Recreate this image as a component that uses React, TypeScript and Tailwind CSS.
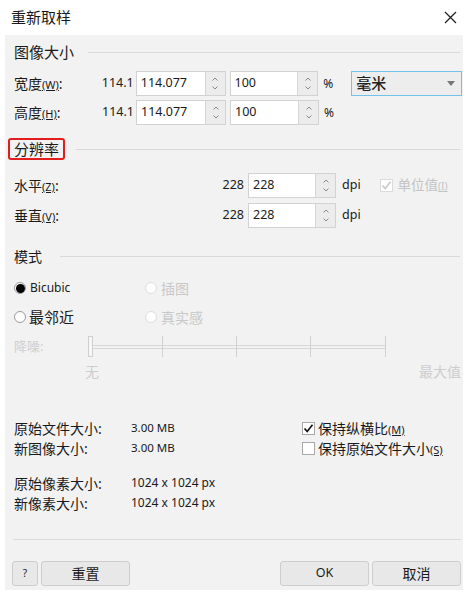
import React from "react"

const font = { fontFamily: '"Noto Sans", "Noto Sans CJK SC", sans-serif' }

function Spin() {
    return (
        <div className="flex flex-col items-center justify-center gap-[5px] bg-[#ececec] border-l border-[#d6d6d6] h-full w-[20px]">
            <svg width="6" height="4" viewBox="0 0 6 4"><path d="M0.5 3.5 L3 1 L5.5 3.5" fill="none" stroke="#8a8a8a" strokeWidth="1" /></svg>
            <svg width="6" height="4" viewBox="0 0 6 4"><path d="M0.5 0.5 L3 3 L5.5 0.5" fill="none" stroke="#8a8a8a" strokeWidth="1" /></svg>
        </div>
    )
}

function NumInput({ value, w }: { value: string; w: string }) {
    return (
        <div className={`flex h-[25px] border border-[#d2d2d2] bg-white ${w}`}>
            <div className="flex-1 flex items-center pl-[4px] text-[12.5px] text-[#1a1a1a]">{value}</div>
            <Spin />
        </div>
    )
}

function SectionHead({ children, lineFrom }: { children: React.ReactNode; lineFrom: string }) {
    return (
        <div className="flex items-center h-[20px]">
            <div className={`shrink-0 ${lineFrom}`}>{children}</div>
            <div className="flex-1 h-px bg-[#d9d9d9] mr-[2px]" />
        </div>
    )
}

function Radio({ checked, disabled }: { checked?: boolean; disabled?: boolean }) {
    return (
        <div className={`w-[12px] h-[12px] rounded-full border flex items-center justify-center bg-white ${disabled ? "border-[#dcdcdc]" : "border-[#9a9a9a]"}`}>
            {checked && <div className="w-[9px] h-[9px] rounded-full bg-black" />}
        </div>
    )
}

function Check({ checked, disabled }: { checked?: boolean; disabled?: boolean }) {
    return (
        <div className={`w-[13px] h-[13px] border bg-white flex items-center justify-center ${disabled ? "border-[#dadada]" : "border-[#a8a8a8]"}`}>
            {checked && (
                <svg width="11" height="11" viewBox="0 0 11 11">
                    <path d="M1.5 5.5 L4.2 8.5 L9.5 1.8" fill="none" stroke={disabled ? "#c9c9c9" : "#111"} strokeWidth="1.7" />
                </svg>
            )}
        </div>
    )
}

function Btn({ children, w }: { children: React.ReactNode; w: string }) {
    return (
        <div className={`h-[25px] ${w} flex items-center justify-center bg-[#e8e8e8] border border-[#cdcdcd] rounded-[3px] text-[#1a1a1a]`}>
            {children}
        </div>
    )
}

export default function App() {
    return (
        <div className="w-[474px] h-[597px] bg-white overflow-hidden text-[#1a1a1a]" style={font}>
            {/* Title bar */}
            <div className="h-[35px] flex items-center justify-between pl-[11px] pr-[17px]">
                <span className="text-[15px]">重新取样</span>
                <svg width="13" height="13" viewBox="0 0 13 13">
                    <path d="M1 1 L12 12 M12 1 L1 12" stroke="#222" strokeWidth="1.3" />
                </svg>
            </div>

            <div className="ml-[5px] w-[458px] h-[555px] bg-[#f2f2f2] pl-[9px] pr-[1px]">
                {/* 图像大小 */}
                <div className="pt-[7px]">
                    <SectionHead lineFrom="w-[74px]"><span className="text-[15px]">图像大小</span></SectionHead>
                </div>

                <div className="flex items-center h-[25px] mt-[9px]">
                    <span className="w-[88px] text-[14px]">宽度<span className="text-[11px] underline">(W)</span>:</span>
                    <span className="w-[30px] text-right text-[12.5px]">114.1</span>
                    <NumInput value="114.077" w="ml-[4px] w-[90px]" />
                    <NumInput value="100" w="ml-[4px] w-[89px]" />
                    <span className="ml-[5px] text-[12px]">%</span>
                    <div className="ml-[18px] w-[111px] h-[25px] border border-[#72c2ea] bg-[#ededed] flex items-center justify-between pl-[4px] pr-[6px]">
                        <span className="text-[15px] font-medium text-[#222]">毫米</span>
                        <svg width="8" height="5" viewBox="0 0 8 5"><path d="M0 0 H8 L4 5 Z" fill="#777" /></svg>
                    </div>
                </div>

                <div className="flex items-center h-[25px] mt-[4px]">
                    <span className="w-[88px] text-[14px]">高度<span className="text-[11px] underline">(H)</span>:</span>
                    <span className="w-[30px] text-right text-[12.5px]">114.1</span>
                    <NumInput value="114.077" w="ml-[4px] w-[90px]" />
                    <NumInput value="100" w="ml-[4px] w-[89px]" />
                    <span className="ml-[5px] text-[12px]">%</span>
                </div>

                {/* 分辨率 */}
                <div className="flex items-center h-[22px] mt-[13px] -ml-[6px]">
                    <div className="shrink-0 border-2 border-[#e21d1d] rounded-[3px] h-[22px] px-[4px] flex items-center text-[15px]">分辨率</div>
                    <div className="flex-1 h-px bg-[#d9d9d9] ml-[11px] mr-[2px]" />
                </div>

                <div className="flex items-center h-[25px] mt-[13px]">
                    <span className="w-[204px] text-[14px]">水平<span className="text-[11px] underline">(Z)</span>:</span>
                    <span className="w-[26px] text-right text-[12.5px]">228</span>
                    <NumInput value="228" w="ml-[4px] w-[88px]" />
                    <span className="ml-[6px] text-[12.5px]">dpi</span>
                    <div className="ml-[19px] flex items-center gap-[5px] text-[#c4c4c4]">
                        <Check checked disabled />
                        <span className="text-[13.5px]">单位值<span className="text-[10px] underline">(I)</span></span>
                    </div>
                </div>

                <div className="flex items-center h-[25px] mt-[5px]">
                    <span className="w-[204px] text-[14px]">垂直<span className="text-[11px] underline">(V)</span>:</span>
                    <span className="w-[26px] text-right text-[12.5px]">228</span>
                    <NumInput value="228" w="ml-[4px] w-[88px]" />
                    <span className="ml-[6px] text-[12.5px]">dpi</span>
                </div>

                {/* 模式 */}
                <div className="mt-[18px]">
                    <SectionHead lineFrom="w-[46px]"><span className="text-[14px]">模式</span></SectionHead>
                </div>

                <div className="flex items-center h-[20px] mt-[12px]">
                    <div className="w-[131px] flex items-center gap-[4px]">
                        <Radio checked />
                        <span className="text-[12px]">Bicubic</span>
                    </div>
                    <div className="flex items-center gap-[4px] text-[#c8c8c8]">
                        <Radio disabled />
                        <span className="text-[14px]">插图</span>
                    </div>
                </div>

                <div className="flex items-center h-[20px] mt-[9px]">
                    <div className="w-[131px] flex items-center gap-[3px]">
                        <Radio />
                        <span className="text-[15px]">最邻近</span>
                    </div>
                    <div className="flex items-center gap-[4px] text-[#c8c8c8]">
                        <Radio disabled />
                        <span className="text-[14px]">真实感</span>
                    </div>
                </div>

                <div className="flex items-center h-[21px] mt-[9px]">
                    <span className="w-[74px] text-[13px] text-[#cfcfcf]">降噪:</span>
                    <div className="w-[5px] h-[21px] border border-[#cfcfcf] bg-[#f7f7f7]" />
                    <div className="relative w-[293px] h-[21px] flex items-center">
                        <div className="w-full h-[4px] border-y border-[#d8d8d8]" />
                        <div className="absolute left-[69px] top-0 w-px h-[21px] bg-[#d0d0d0]" />
                        <div className="absolute left-[143px] top-0 w-px h-[21px] bg-[#d0d0d0]" />
                        <div className="absolute left-[217px] top-0 w-px h-[21px] bg-[#d0d0d0]" />
                        <div className="absolute right-0 top-0 w-px h-[21px] bg-[#d0d0d0]" />
                    </div>
                </div>

                <div className="flex items-center justify-between h-[16px] mt-[6px] text-[14px] text-[#cdcdcd]">
                    <span className="ml-[71px]">无</span>
                    <span className="mr-[1px]">最大值</span>
                </div>

                {/* 大小信息 */}
                <div className="flex mt-[39px]">
                    <div className="w-[288px]">
                        <div className="flex items-center h-[20px]">
                            <span className="w-[117px] text-[14px]">原始文件大小:</span>
                            <span className="text-[11.5px]">3.00 MB</span>
                        </div>
                        <div className="flex items-center h-[20px]">
                            <span className="w-[117px] text-[14px]">新图像大小:</span>
                            <span className="text-[11.5px]">3.00 MB</span>
                        </div>
                    </div>
                    <div>
                        <div className="flex items-center h-[20px] gap-[3px]">
                            <Check checked />
                            <span className="text-[14px]">保持纵横比<span className="text-[11px] underline">(M)</span></span>
                        </div>
                        <div className="flex items-center h-[20px] gap-[3px]">
                            <Check />
                            <span className="text-[14px]">保持原始文件大小<span className="text-[11px] underline">(S)</span></span>
                        </div>
                    </div>
                </div>

                <div className="mt-[15px]">
                    <div className="flex items-center h-[20px]">
                        <span className="w-[117px] text-[14px]">原始像素大小:</span>
                        <span className="text-[12px]">1024 x 1024 px</span>
                    </div>
                    <div className="flex items-center h-[20px]">
                        <span className="w-[117px] text-[14px]">新像素大小:</span>
                        <span className="text-[12px]">1024 x 1024 px</span>
                    </div>
                </div>

                <div className="h-px bg-[#dadada] mt-[26px] mr-[1px] -ml-[1px]" />

                {/* Buttons */}
                <div className="flex items-center mt-[21px] -ml-[2px]">
                    <Btn w="w-[26px]"><span className="text-[10px]">?</span></Btn>
                    <Btn w="ml-[3px] w-[89px]"><span className="text-[14px]">重置</span></Btn>
                    <div className="flex-1" />
                    <Btn w="w-[89px]"><span className="text-[12.5px]">OK</span></Btn>
                    <Btn w="ml-[3px] w-[89px] mr-[1px]"><span className="text-[14px]">取消</span></Btn>
                </div>
            </div>
        </div>
    )
}
